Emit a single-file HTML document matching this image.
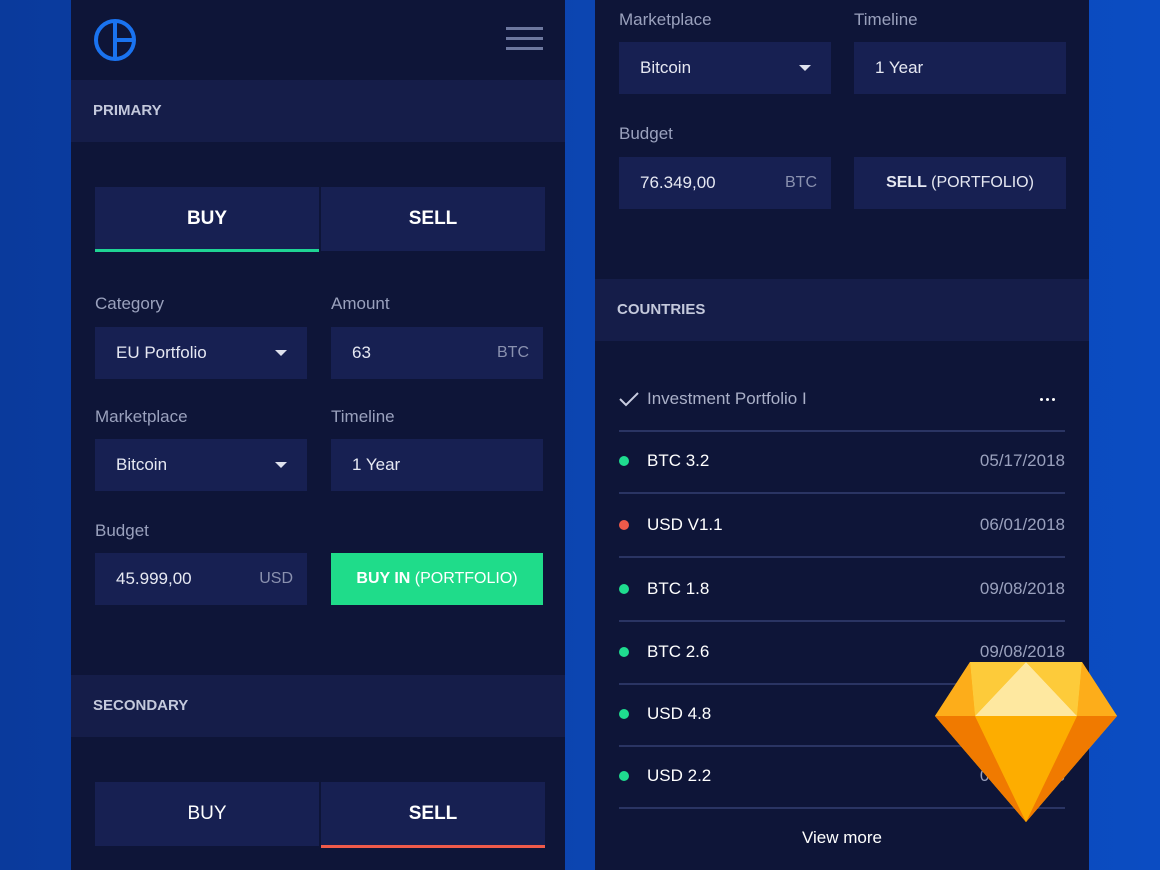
<html><head><style>
body{margin:0;width:1160px;height:870px;overflow:hidden;background:linear-gradient(90deg,#0a3a9c,#0c47b5 60%,#0b4cc2);font-family:"Liberation Sans",sans-serif;position:relative}
.p{position:absolute;top:0;height:870px;width:494px;background:#0e1538}
.hdr{position:absolute;left:0;width:494px;height:62px;background:#151d49;color:#c4c9dc;font-size:15px;font-weight:bold;line-height:62px;text-indent:22px}
.a{position:absolute}
.lbl{position:absolute;color:#9aa1bd;font-size:17px}
.in{position:absolute;background:#172052;height:52px;width:212px;color:#e6e8f2;font-size:17px;line-height:52px;box-sizing:border-box;padding-left:21px}
.in .u{position:absolute;right:14px;top:0;color:#8a91af;font-size:16px}
.tri{position:absolute;right:20px;top:23px;width:0;height:0;border-left:6px solid transparent;border-right:6px solid transparent;border-top:6px solid #dfe2ee}
.tab{position:absolute;background:#172052;height:64px;width:224px;color:#fff;font-size:19px;text-align:center;line-height:64px;font-weight:bold}
.row{position:absolute;left:24px;width:446px;height:62px;border-bottom:2px solid #2a3463;color:#fff;font-size:17px;line-height:62px}
.row .d{position:absolute;left:0;top:26px;width:10px;height:10px;border-radius:50%;background:#1fdc8f}
.row .t{position:absolute;left:28px}
.row .dt{position:absolute;right:0;color:#9aa1bd}
</style></head><body>
<div class="p" style="left:71px">
<svg class="a" style="left:22px;top:18px" width="44" height="44" viewBox="0 0 44 44"><circle cx="22" cy="22" r="19" fill="none" stroke="#1a73f0" stroke-width="4"/><path d="M22 3V41M22 22H41" stroke="#1a73f0" stroke-width="4"/></svg>
<div class="a" style="left:435px;top:27px;width:37px;height:3px;background:#6d789f;box-shadow:0 10px 0 #6d789f,0 20px 0 #6d789f"></div>
<div class="hdr" style="top:80px">PRIMARY</div>
<div class="tab" style="left:24px;top:187px;border-bottom:3px solid #1fd494;height:62px">BUY</div>
<div class="tab" style="left:250px;top:187px">SELL</div>
<div class="lbl" style="left:24px;top:294px">Category</div><div class="lbl" style="left:260px;top:294px">Amount</div>
<div class="in" style="left:24px;top:327px">EU Portfolio<div class="tri"></div></div>
<div class="in" style="left:260px;top:327px">63<span class="u">BTC</span></div>
<div class="lbl" style="left:24px;top:407px">Marketplace</div><div class="lbl" style="left:260px;top:407px">Timeline</div>
<div class="in" style="left:24px;top:439px">Bitcoin<div class="tri"></div></div>
<div class="in" style="left:260px;top:439px">1 Year</div>
<div class="lbl" style="left:24px;top:521px">Budget</div>
<div class="in" style="left:24px;top:553px">45.999,00<span class="u">USD</span></div>
<div class="in" style="left:260px;top:553px;background:#1fdc8a;padding:0;text-align:center;font-weight:bold;font-size:16px;color:#fff">BUY IN <span style="font-weight:normal">(PORTFOLIO)</span></div>
<div class="hdr" style="top:675px">SECONDARY</div>
<div class="tab" style="left:24px;top:782px;font-weight:normal">BUY</div>
<div class="tab" style="left:250px;top:782px;border-bottom:3px solid #ef5a4a;height:63px">SELL</div>
</div>
<div class="p" style="left:595px">
<div class="lbl" style="left:24px;top:10px">Marketplace</div><div class="lbl" style="left:259px;top:10px">Timeline</div>
<div class="in" style="left:24px;top:42px">Bitcoin<div class="tri"></div></div>
<div class="in" style="left:259px;top:42px">1 Year</div>
<div class="lbl" style="left:24px;top:124px">Budget</div>
<div class="in" style="left:24px;top:157px">76.349,00<span class="u">BTC</span></div>
<div class="in" style="left:259px;top:157px;padding:0;text-align:center;font-weight:bold;font-size:16px">SELL <span style="font-weight:normal">(PORTFOLIO)</span></div>
<div class="hdr" style="top:279px">COUNTRIES</div>
<div class="row" style="top:368px;color:#aab0c8">
<svg class="a" style="left:0;top:23px" width="20" height="16"><path d="M1 8L7 14L19 2" fill="none" stroke="#c8cce0" stroke-width="2"/></svg>
<span class="t">Investment Portfolio I</span>
<div class="a" style="right:10px;top:30px;width:3px;height:3px;background:#fff;border-radius:50%;box-shadow:-6px 0 0 #fff,-12px 0 0 #fff"></div></div>
<div class="row" style="top:430px"><div class="d"></div><span class="t">BTC 3.2</span><span class="dt">05/17/2018</span></div>
<div class="row" style="top:494px"><div class="d" style="background:#ef5a4a"></div><span class="t">USD V1.1</span><span class="dt">06/01/2018</span></div>
<div class="row" style="top:558px"><div class="d"></div><span class="t">BTC 1.8</span><span class="dt">09/08/2018</span></div>
<div class="row" style="top:621px"><div class="d"></div><span class="t">BTC 2.6</span><span class="dt">09/08/2018</span></div>
<div class="row" style="top:683px"><div class="d"></div><span class="t">USD 4.8</span><span class="dt">09/08/2018</span></div>
<div class="row" style="top:745px"><div class="d"></div><span class="t">USD 2.2</span><span class="dt">09/08/2018</span></div>
<div class="a" style="left:0;width:494px;top:828px;text-align:center;color:#fff;font-size:17px">View more</div>
</div>
<svg class="a" style="left:930px;top:655px" width="192" height="170" viewBox="930 655 192 170">
<polygon points="970,662 1082,662 1117,716 1026,822 935,716" fill="#fdb300"/>
<polygon points="935,716 1117,716 1026,822" fill="#f89b00"/>
<polygon points="935,716 975,716 1026,822" fill="#f07a00"/>
<polygon points="1077,716 1117,716 1026,822" fill="#f07a00"/>
<polygon points="975,716 1077,716 1026,822" fill="#fdad00"/>
<polygon points="1026,662 975,716 1077,716" fill="#fee8a0"/>
<polygon points="970,662 1026,662 975,716" fill="#fdcb3a"/>
<polygon points="1026,662 1082,662 1077,716" fill="#fdcb3a"/>
<polygon points="970,662 975,716 935,716" fill="#fdad1a"/>
<polygon points="1082,662 1117,716 1077,716" fill="#fdad1a"/>
</svg>
</body></html>
